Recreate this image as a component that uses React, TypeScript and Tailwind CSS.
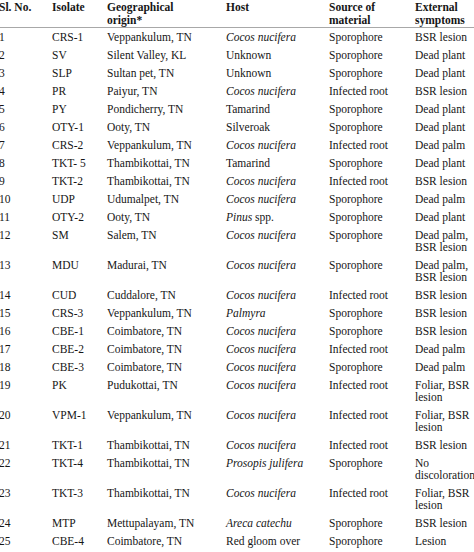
import React from 'react'

type Row = {
  no: number
  isolate: string
  origin: string
  host: React.ReactNode
  source: string
  symptoms: React.ReactNode
}

const I = ({ children }: { children: React.ReactNode }) => <span className="italic">{children}</span>

const cocos = <I>Cocos nucifera</I>

const rows: Row[] = [
  { no: 1, isolate: 'CRS-1', origin: 'Veppankulum, TN', host: cocos, source: 'Sporophore', symptoms: 'BSR lesion' },
  { no: 2, isolate: 'SV', origin: 'Silent Valley, KL', host: 'Unknown', source: 'Sporophore', symptoms: 'Dead plant' },
  { no: 3, isolate: 'SLP', origin: 'Sultan pet, TN', host: 'Unknown', source: 'Sporophore', symptoms: 'Dead plant' },
  { no: 4, isolate: 'PR', origin: 'Paiyur, TN', host: cocos, source: 'Infected root', symptoms: 'BSR lesion' },
  { no: 5, isolate: 'PY', origin: 'Pondicherry, TN', host: 'Tamarind', source: 'Sporophore', symptoms: 'Dead plant' },
  { no: 6, isolate: 'OTY-1', origin: 'Ooty, TN', host: 'Silveroak', source: 'Sporophore', symptoms: 'Dead plant' },
  { no: 7, isolate: 'CRS-2', origin: 'Veppankulum, TN', host: cocos, source: 'Infected root', symptoms: 'Dead palm' },
  { no: 8, isolate: 'TKT- 5', origin: 'Thambikottai, TN', host: 'Tamarind', source: 'Sporophore', symptoms: 'Dead plant' },
  { no: 9, isolate: 'TKT-2', origin: 'Thambikottai, TN', host: cocos, source: 'Infected root', symptoms: 'BSR lesion' },
  { no: 10, isolate: 'UDP', origin: 'Udumalpet, TN', host: cocos, source: 'Sporophore', symptoms: 'Dead palm' },
  { no: 11, isolate: 'OTY-2', origin: 'Ooty, TN', host: <><I>Pinus</I> spp.</>, source: 'Sporophore', symptoms: 'Dead plant' },
  { no: 12, isolate: 'SM', origin: 'Salem, TN', host: cocos, source: 'Sporophore', symptoms: <>Dead palm,<br />BSR lesion</> },
  { no: 13, isolate: 'MDU', origin: 'Madurai, TN', host: cocos, source: 'Sporophore', symptoms: <>Dead palm,<br />BSR lesion</> },
  { no: 14, isolate: 'CUD', origin: 'Cuddalore, TN', host: cocos, source: 'Infected root', symptoms: 'BSR lesion' },
  { no: 15, isolate: 'CRS-3', origin: 'Veppankulum, TN', host: <I>Palmyra</I>, source: 'Sporophore', symptoms: 'BSR lesion' },
  { no: 16, isolate: 'CBE-1', origin: 'Coimbatore, TN', host: cocos, source: 'Sporophore', symptoms: 'BSR lesion' },
  { no: 17, isolate: 'CBE-2', origin: 'Coimbatore, TN', host: cocos, source: 'Infected root', symptoms: 'Dead palm' },
  { no: 18, isolate: 'CBE-3', origin: 'Coimbatore, TN', host: cocos, source: 'Sporophore', symptoms: 'Dead palm' },
  { no: 19, isolate: 'PK', origin: 'Pudukottai, TN', host: cocos, source: 'Infected root', symptoms: <>Foliar, BSR<br />lesion</> },
  { no: 20, isolate: 'VPM-1', origin: 'Veppankulum, TN', host: cocos, source: 'Infected root', symptoms: <>Foliar, BSR<br />lesion</> },
  { no: 21, isolate: 'TKT-1', origin: 'Thambikottai, TN', host: cocos, source: 'Infected root', symptoms: 'BSR lesion' },
  { no: 22, isolate: 'TKT-4', origin: 'Thambikottai, TN', host: <I>Prosopis julifera</I>, source: 'Sporophore', symptoms: <>No<br />discoloration</> },
  { no: 23, isolate: 'TKT-3', origin: 'Thambikottai, TN', host: cocos, source: 'Infected root', symptoms: <>Foliar, BSR<br />lesion</> },
  { no: 24, isolate: 'MTP', origin: 'Mettupalayam, TN', host: <I>Areca catechu</I>, source: 'Sporophore', symptoms: 'BSR lesion' },
  { no: 25, isolate: 'CBE-4', origin: 'Coimbatore, TN', host: 'Red gloom over', source: 'Sporophore', symptoms: 'Lesion' },
]

const cols = 'grid grid-cols-[53px_55px_119px_103px_86px_60px]'

export default function App() {
  return (
    <div className="w-[474px] h-[552px] overflow-hidden bg-white text-[#161616] text-[11.5px] font-['Liberation_Serif',serif]">
      <div className="ml-[-1px] w-[476px]">
        {/* Header */}
        <div className={`${cols} h-[28px] pt-[1px] leading-[13px] font-bold border-b border-[#a8a8a8]`}>
          <div>Sl. No.</div>
          <div>Isolate</div>
          <div>Geographical<br />origin*</div>
          <div>Host</div>
          <div>Source of<br />material</div>
          <div>External<br />symptoms</div>
        </div>

        {/* Body */}
        {rows.map((r) => (
          <div key={r.no} className={`${cols} py-[3px] leading-[12px]`}>
            <div>{r.no}</div>
            <div>{r.isolate}</div>
            <div>{r.origin}</div>
            <div>{r.host}</div>
            <div>{r.source}</div>
            <div className="whitespace-nowrap">{r.symptoms}</div>
          </div>
        ))}
      </div>
    </div>
  )
}
